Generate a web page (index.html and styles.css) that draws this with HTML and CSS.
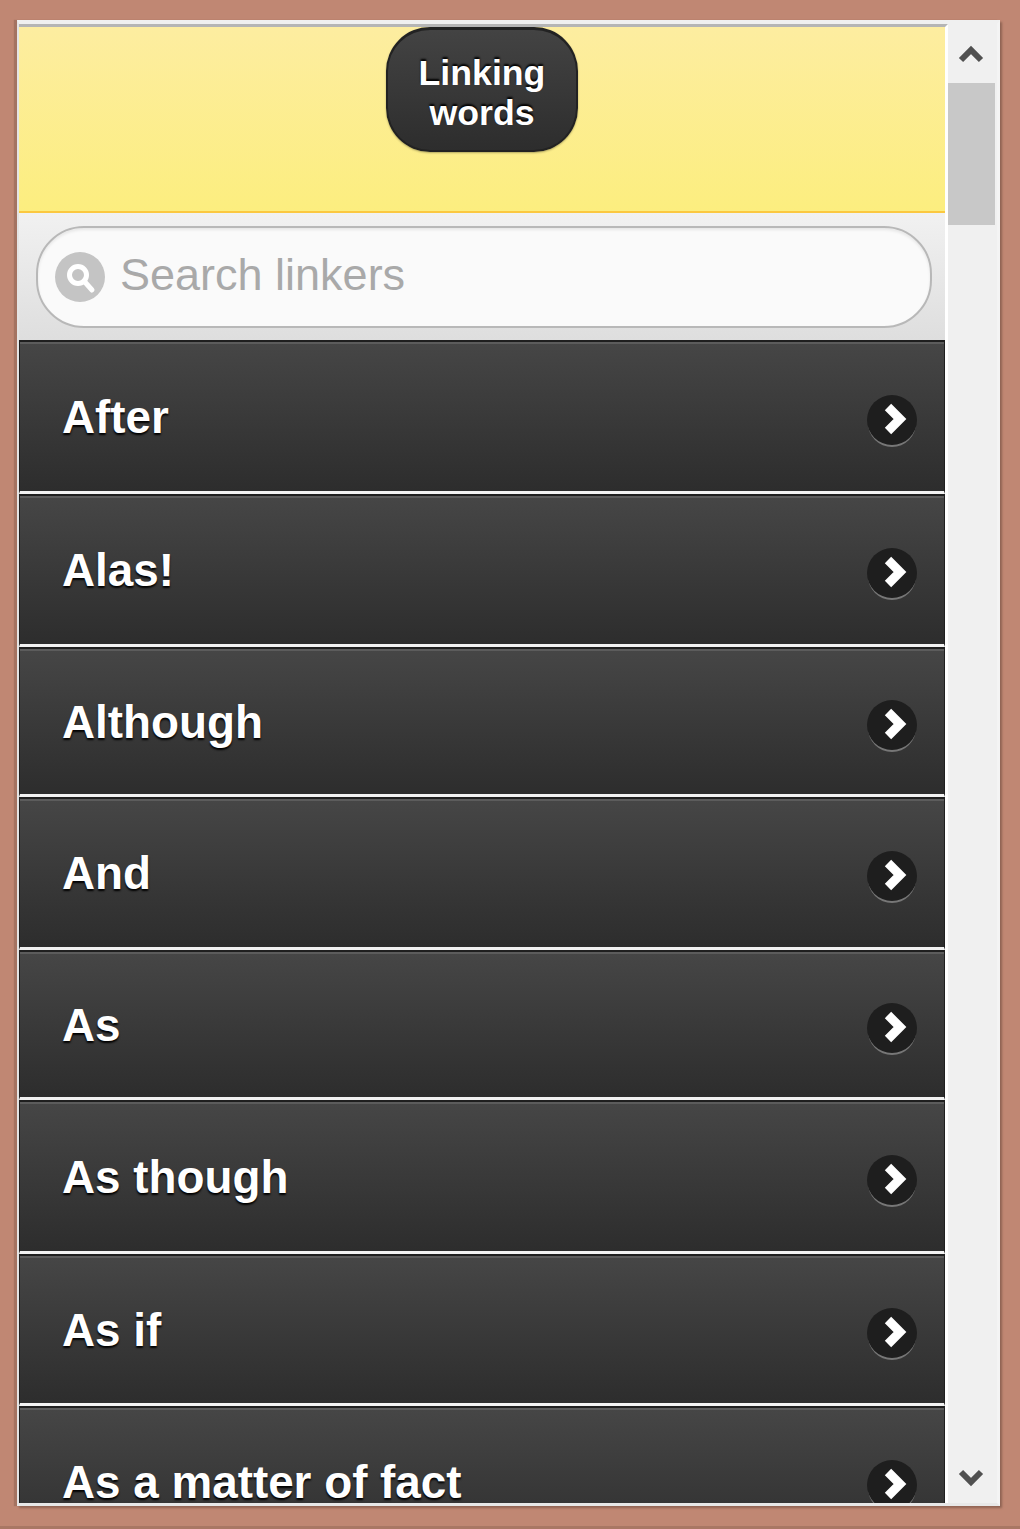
FILE: index.html
```html
<!DOCTYPE html>
<html lang="en">
<head>
  <meta charset="UTF-8">
  <meta name="viewport" content="width=device-width, initial-scale=1.0">
  <title>Linking words</title>
  <link rel="stylesheet" href="styles.css">
</head>
<body>

  <div class="window">
    <div class="page">
      <!-- Header -->
      <div class="header">
        <a href="#" class="title">Linking<br>words</a>
      </div>

      <!-- Search -->
      <div class="search-bar">
        <div class="search-box">
          <svg class="search-icon" viewBox="0 0 50 50">
            <circle cx="25" cy="25" r="25" fill="#c4c4c4"/>
            <circle cx="23" cy="23" r="8.5" fill="#c4c4c4" stroke="#fff" stroke-width="5"/>
            <path d="M29 29l8 9" stroke="#fff" stroke-width="5" stroke-linecap="round"/>
          </svg>
          <span class="placeholder">Search linkers</span>
        </div>
      </div>

      <!-- Linker list -->
      <ul class="list">
        <li class="row"><span>After</span><i class="arrow"><svg viewBox="0 0 50 50"><path d="M21 12l12 12-12 12" /></svg></i></li>
        <li class="row"><span>Alas!</span><i class="arrow"><svg viewBox="0 0 50 50"><path d="M21 12l12 12-12 12" /></svg></i></li>
        <li class="row"><span>Although</span><i class="arrow"><svg viewBox="0 0 50 50"><path d="M21 12l12 12-12 12" /></svg></i></li>
        <li class="row"><span>And</span><i class="arrow"><svg viewBox="0 0 50 50"><path d="M21 12l12 12-12 12" /></svg></i></li>
        <li class="row"><span>As</span><i class="arrow"><svg viewBox="0 0 50 50"><path d="M21 12l12 12-12 12" /></svg></i></li>
        <li class="row"><span>As though</span><i class="arrow"><svg viewBox="0 0 50 50"><path d="M21 12l12 12-12 12" /></svg></i></li>
        <li class="row"><span>As if</span><i class="arrow"><svg viewBox="0 0 50 50"><path d="M21 12l12 12-12 12" /></svg></i></li>
        <li class="row"><span>As a matter of fact</span><i class="arrow"><svg viewBox="0 0 50 50"><path d="M21 12l12 12-12 12" /></svg></i></li>
      </ul>
    </div>

    <!-- Scrollbar -->
    <div class="scrollbar">
      <svg class="scroll-btn" viewBox="0 0 26 20"><path d="M3 16L13 6l10 10"/></svg>
      <div class="thumb"></div>
      <div class="track"></div>
      <svg class="scroll-btn down" viewBox="0 0 26 20"><path d="M3 4l10 10L23 4"/></svg>
    </div>
  </div>

</body>
</html>
```

FILE: styles.css
```css
/* Basic Styles */
html, body {
  height: 100%;
}

body {
  margin: 0;
  padding: 20px 20px 20px 17px;
  box-sizing: border-box;
  background-color: #c08773;
  border-bottom: 3px solid #a97764;
  font-family: "Liberation Sans", Arial, sans-serif;
  overflow: hidden;
}

.window {
  display: flex;
  height: 100%;
  background-color: #f0f0f0;
  border-top: 4px solid #f0f0f0;
  border-right: 3px solid #f4f4f4;
  border-bottom: 3px solid #e8e8e8;
  border-left: 2px solid #e4e4e4;
  box-sizing: border-box;
  box-shadow: -3px 0 1px #a47361, 2px 2px 2px #8f6353;
  overflow: hidden;
}

.page {
  flex: 0 0 926px;
  border-top: 3px solid #b5b5b5;
  border-right: 3px solid #fff;
  overflow: hidden;
}

/* Header */
.header {
  height: 184px;
  background: linear-gradient(#fdeda0, #fcee7f);
  border-bottom: 2px solid #fbc840;
  text-align: center;
}

.title {
  display: inline-block;
  width: 192px;
  height: 125px;
  box-sizing: border-box;
  padding-top: 23px;
  background: linear-gradient(#434343, #2d2d2d);
  border: 2px solid #222;
  border-top-width: 3px;
  border-radius: 44px;
  color: #fff;
  font-size: 35.7px;
  font-weight: bold;
  line-height: 40px;
  text-decoration: none;
  text-shadow: 0 -2px 2px #000;
  box-shadow: 0 1px 2px rgba(0, 0, 0, 0.3);
}

/* Search */
.search-bar {
  height: 127px;
  box-sizing: border-box;
  padding: 13px 13px 0 17px;
  background: linear-gradient(#f1f1f1, #dedede);
}

.search-box {
  display: flex;
  align-items: center;
  height: 102px;
  box-sizing: border-box;
  padding-left: 17px;
  background-color: #fafafa;
  border: 2px solid #b8b8b8;
  border-radius: 48px;
  box-shadow: inset 0 2px 3px rgba(0, 0, 0, 0.08);
}

.search-icon {
  width: 50px;
  height: 50px;
  flex: none;
}

.placeholder {
  margin: -4px 0 0 15px;
  color: #a9a9a9;
  font-size: 45px;
}

/* List */
.list {
  display: grid;
  grid-template-rows: 154px 153px 150px 153px 150px 154px 152px 152px;
  list-style: none;
  margin: 0;
  padding: 0;
}

.row {
  display: flex;
  align-items: center;
  justify-content: space-between;
  box-sizing: border-box;
  padding: 2px 27px 0 42px;
  background: linear-gradient(#464646, #2d2d2d);
  border: 1px solid #1f1f1f;
  border-top-width: 2px;
  border-bottom: 3px solid #f2f2f2;
  box-shadow: inset 0 2px 0 #5c5c5c;
  color: #fff;
  font-size: 45.8px;
  font-weight: bold;
  text-shadow: 0 2px 2px #000;
}

.arrow {
  display: block;
  width: 50px;
  height: 50px;
  flex: none;
  margin-top: 4px;
  background-color: #1e1e1e;
  border-radius: 50%;
  box-shadow: 0 3px 0 -1px #777;
}

.arrow svg {
  display: block;
  width: 50px;
  height: 50px;
  fill: none;
  stroke: #fff;
  stroke-width: 9;
}

/* Scrollbar */
.scrollbar {
  flex: 1;
  display: flex;
  flex-direction: column;
  background-color: #f0f0f0;
}

.scroll-btn {
  flex: none;
  width: 26px;
  height: 20px;
  margin: 20px 0 19px 10px;
  fill: none;
  stroke: #505050;
  stroke-width: 6;
}

.scroll-btn.down {
  margin: 0 0 15px 10px;
}

.thumb {
  flex: none;
  width: 47px;
  height: 142px;
  background-color: #c8c8c8;
}

.track {
  flex: 1;
}
```
